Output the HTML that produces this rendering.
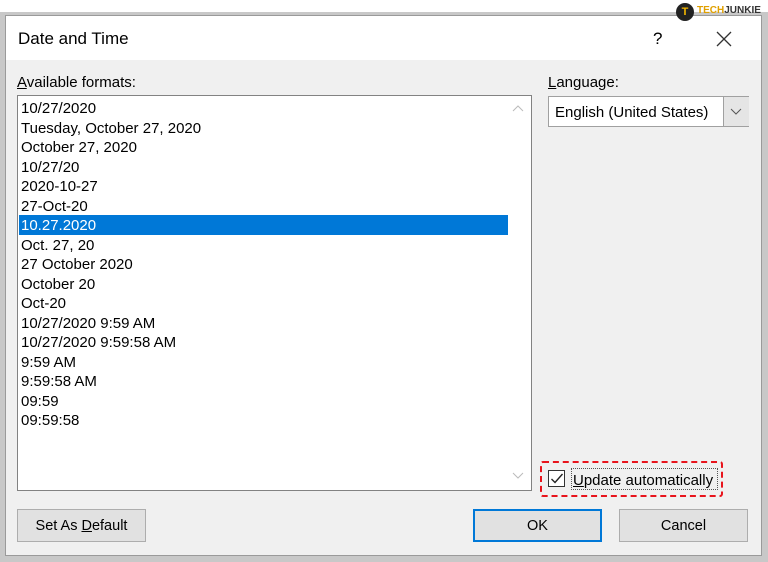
<!DOCTYPE html><html><head><style>
body{margin:0;width:768px;height:562px;background:#fff;position:relative;overflow:hidden;font-family:"Liberation Sans",sans-serif;font-size:14px;color:#000}
.a{position:absolute}
.btn{position:absolute;background:#e1e1e1;border:1px solid #adadad;box-sizing:border-box;text-align:center;line-height:32px;font-size:14.5px}
.row{position:absolute;left:3px;width:487px;height:20px;line-height:21px;padding-left:0;font-size:15px}
</style></head><body>
<div class="a" style="left:0;top:12px;width:768px;height:550px;background:#c8c8c8"></div>
<div class="a" style="left:5px;top:15px;width:757px;height:541px;background:#fff;border:1px solid #9a9a9a;box-sizing:border-box"></div>
<div class="a" style="left:6px;top:60px;width:755px;height:495px;background:#f0f0f0"></div>
<div class="a" style="left:18px;top:29px;font-size:17px">Date and Time</div>
<div class="a" style="left:653px;top:29px;font-size:17px">?</div>
<svg class="a" style="left:716px;top:31px" width="16" height="16"><path d="M1 1L15 15M15 1L1 15" stroke="#333" stroke-width="1.3"/></svg>
<div class="a" style="left:676px;top:3px;width:18px;height:18px;border-radius:50%;background:#222;color:#f5b800;font-size:11px;font-weight:bold;text-align:center;line-height:18px">T</div>
<div class="a" style="left:697px;top:5px;font-size:10px;font-weight:bold;color:#333"><span style="color:#e0a000">TECH</span>JUNKIE</div>
<div class="a" style="left:17px;top:74px;font-size:15px"><u>A</u>vailable formats:</div>
<div class="a" style="left:548px;top:74px;font-size:15px"><u>L</u>anguage:</div>
<div class="a" style="left:17px;top:95px;width:515px;height:396px;background:#fff;border:1px solid #828282;box-sizing:border-box">
<div class="row" style="top:2px">10/27/2020</div>
<div class="row" style="top:22px">Tuesday, October 27, 2020</div>
<div class="row" style="top:41px">October 27, 2020</div>
<div class="row" style="top:61px">10/27/20</div>
<div class="row" style="top:80px">2020-10-27</div>
<div class="row" style="top:100px">27-Oct-20</div>
<div class="row" style="top:119px;left:1px;padding-left:2px;background:#0078d7;color:#fff">10.27.2020</div>
<div class="row" style="top:139px">Oct. 27, 20</div>
<div class="row" style="top:158px">27 October 2020</div>
<div class="row" style="top:178px">October 20</div>
<div class="row" style="top:197px">Oct-20</div>
<div class="row" style="top:217px">10/27/2020 9:59 AM</div>
<div class="row" style="top:236px">10/27/2020 9:59:58 AM</div>
<div class="row" style="top:256px">9:59 AM</div>
<div class="row" style="top:275px">9:59:58 AM</div>
<div class="row" style="top:295px">09:59</div>
<div class="row" style="top:314px">09:59:58</div>
<svg class="a" style="left:494px;top:8px" width="12" height="8"><path d="M1 7L6 2L11 7" fill="none" stroke="#bbb"/></svg>
<svg class="a" style="left:494px;top:376px" width="12" height="8"><path d="M1 1L6 6L11 1" fill="none" stroke="#bbb"/></svg>
</div>
<div class="a" style="left:548px;top:96px;width:201px;height:31px;background:#fff;border:1px solid #a0a0a0;box-sizing:border-box"><div class="a" style="left:6px;top:7px;font-size:15px">English (United States)</div>
<div class="a" style="left:174px;top:0;width:25px;height:29px;background:#e5e5e5;border-left:1px solid #a0a0a0"></div>
<svg class="a" style="left:181px;top:11px" width="12" height="8"><path d="M1 1L6 6L11 1" fill="none" stroke="#555"/></svg></div>
<div class="a" style="left:540px;top:461px;width:183px;height:36px;border:2px dashed #e8141c;box-sizing:border-box;border-radius:3px"></div>
<div class="a" style="left:548px;top:470px;width:17px;height:17px;border:1px solid #333;background:#fff;box-sizing:border-box"></div>
<svg class="a" style="left:550px;top:472px" width="14" height="13"><path d="M1.5 7L5 10.5L12.5 2" fill="none" stroke="#222" stroke-width="1.4"/></svg>
<div class="a" style="left:571px;top:468px;width:147px;height:22px;border:1px dotted #555;box-sizing:border-box"></div>
<div class="a" style="left:573px;top:472px;font-size:15px"><u>U</u>pdate automatically</div>
<div class="btn" style="left:17px;top:509px;width:129px;height:33px">Set As <u>D</u>efault</div>
<div class="btn" style="left:473px;top:509px;width:129px;height:33px;border:2px solid #0078d7;line-height:30px">OK</div>
<div class="btn" style="left:619px;top:509px;width:129px;height:33px">Cancel</div>
</body></html>
